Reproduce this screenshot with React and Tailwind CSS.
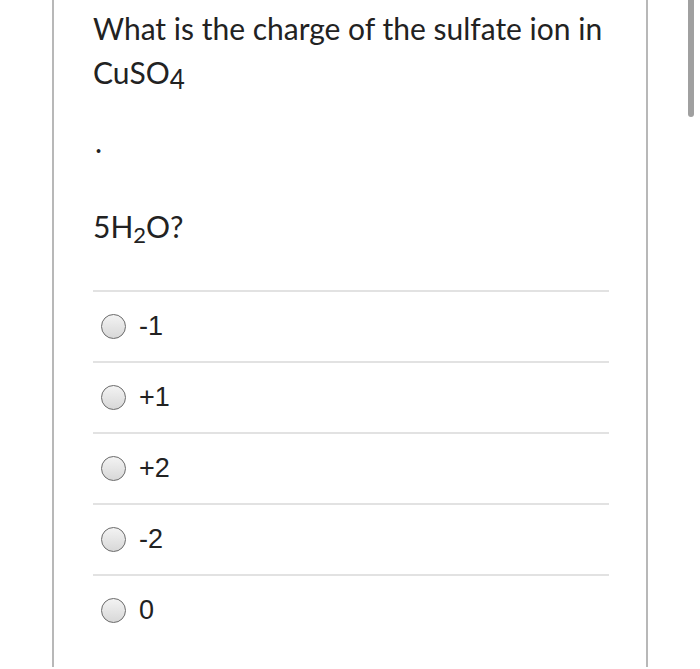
export default function App() {
  const opts = ["-1", "+1", "+2", "-2", "0"];
  return (
    <div className="w-[700px] h-[669px] bg-white relative overflow-hidden">
      <div className="ml-[52px] w-[596px] h-[667px] border-x-2 border-[#b8b8b8] pl-[39px] pr-[37px] pt-[6px]">
        <div className="text-[30px] leading-[44px] text-[#222]" style={{ fontFamily: "Lato, 'Open Sans', sans-serif" }}>
          <div>What is the charge of the sulfate ion in</div>
          <div>
            CuSO<sub className="text-[26px] leading-[0] relative top-[5px] align-baseline">4</sub>
          </div>
          <div className="mt-[25px] pl-[2px]">.</div>
          <div className="mt-[41px]">
            5H<sub className="text-[22px] leading-[0] relative top-[5px] align-baseline">2</sub>O?
          </div>
        </div>
        <div className="mt-[42px] flex flex-col">
          {opts.map((o) => (
            <div key={o} className="border-t-2 border-[#e2e2e2] h-[71px] flex items-center pl-[8px] gap-[13px]">
              <span className="w-[25px] h-[25px] rounded-full border-[1.5px] border-[#6a6a6a] bg-gradient-to-b from-[#f3f3f3] to-[#d8d8d8] shrink-0" />
              <span className="text-[27px] text-[#222]" style={{ fontFamily: "'Liberation Sans', Arial, sans-serif" }}>{o}</span>
            </div>
          ))}
        </div>
      </div>
      <div className="absolute left-[688px] top-0 w-[6px] h-[117px] rounded-b-full bg-[#a0a0a0]" />
    </div>
  );
}
